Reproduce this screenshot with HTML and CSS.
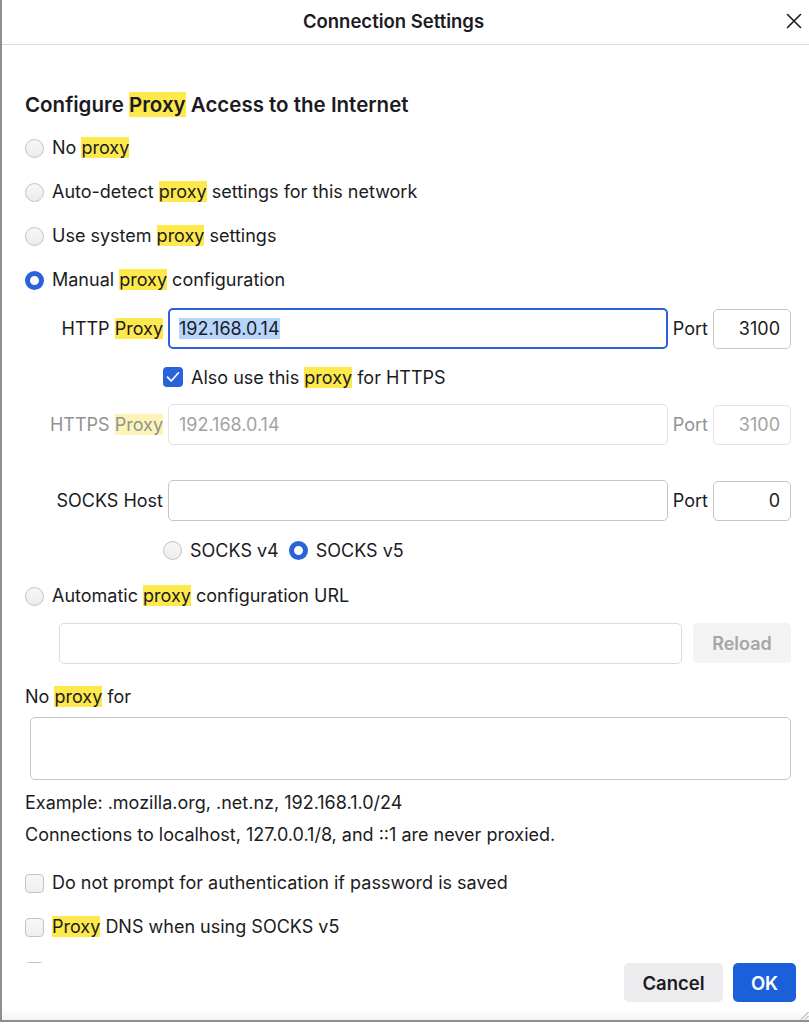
FILE: index.html
```html
<!DOCTYPE html>
<html lang="en">
<head>
<meta charset="utf-8">
<title>Connection Settings</title>
<link rel="stylesheet" href="styles.css">
</head>
<body>
<div class="window">
  <header class="titlebar">
    <h1 class="title">Connection Settings</h1>
    <button class="close" aria-label="Close">
      <svg width="16" height="16" viewBox="0 0 16 16"><path d="M1.5 1.5 L14.5 14.5 M14.5 1.5 L1.5 14.5" stroke="#1c1b22" stroke-width="1.6" fill="none" stroke-linecap="round"/></svg>
    </button>
  </header>

  <main class="content">
    <h2 class="heading">Configure <mark>Proxy</mark> Access to the Internet</h2>

    <label class="opt first"><span class="radio"></span><span>No <mark>proxy</mark></span></label>
    <label class="opt"><span class="radio"></span><span>Auto-detect <mark>proxy</mark> settings for this network</span></label>
    <label class="opt"><span class="radio"></span><span>Use system <mark>proxy</mark> settings</span></label>
    <label class="opt"><span class="radio on"></span><span>Manual <mark>proxy</mark> configuration</span></label>

    <div class="prow http">
      <span class="plabel">HTTP <mark>Proxy</mark></span>
      <div class="field focus"><span class="sel">192.168.0.14</span></div>
      <span class="port">Port</span>
      <div class="field num">3100</div>
    </div>

    <div class="prow check-row">
      <label class="chk-line"><span class="check on"><svg width="14" height="12" viewBox="0 0 14 12"><path d="M1.5 6.2 L5.2 10 L12.5 1.8" stroke="#fff" stroke-width="1.7" fill="none" stroke-linecap="round" stroke-linejoin="round"/></svg></span><span>Also use this <mark>proxy</mark> for HTTPS</span></label>
    </div>

    <div class="prow https disabled">
      <span class="plabel">HTTPS <mark>Proxy</mark></span>
      <div class="field">192.168.0.14</div>
      <span class="port">Port</span>
      <div class="field num">3100</div>
    </div>

    <div class="prow socks">
      <span class="plabel">SOCKS Host</span>
      <div class="field"></div>
      <span class="port">Port</span>
      <div class="field num">0</div>
    </div>

    <div class="prow socks-ver">
      <div class="ver-line">
        <label class="mini"><span class="radio"></span><span>SOCKS v4</span></label>
        <label class="mini"><span class="radio on"></span><span>SOCKS v5</span></label>
      </div>
    </div>

    <label class="opt auto"><span class="radio"></span><span>Automatic <mark>proxy</mark> configuration URL</span></label>

    <div class="url-row">
      <div class="field url"></div>
      <button class="reload">Reload</button>
    </div>

    <p class="noproxy">No <mark>proxy</mark> for</p>
    <div class="textarea"></div>
    <p class="hint example">Example: .mozilla.org, .net.nz, 192.168.1.0/24</p>
    <p class="hint">Connections to localhost, 127.0.0.1/8, and ::1 are never proxied.</p>

    <label class="opt chk first-chk"><span class="check"></span><span>Do not prompt for authentication if password is saved</span></label>
    <label class="opt chk"><span class="check"></span><span><mark>Proxy</mark> DNS when using SOCKS v5</span></label>
    <div class="opt chk"><span class="check"></span></div>
  </main>

  <footer class="buttons">
    <button class="btn cancel">Cancel</button>
    <button class="btn ok">OK</button>
    <svg class="grip" width="9" height="9" viewBox="0 0 9 9"><path d="M8.5 1 L1 8.5 M8.5 5 L5 8.5" stroke="#9a9a9a" stroke-width="1" fill="none"/></svg>
  </footer>
</div>
</body>
</html>
```

FILE: styles.css
```css
* { box-sizing: border-box; }

html, body {
  margin: 0;
  padding: 0;
  background: #ffffff;
}

body {
  font-family: "Inter", "Liberation Sans", sans-serif;
  font-size: 18px;
  color: #1c1b22;
  width: 809px;
}

mark {
  background: #fde94b;
  color: inherit;
}

.window {
  position: relative;
  height: 1022px;
  border-left: 2px solid #8e8e8e;
  border-bottom: 2px solid #8e8e8e;
  display: flex;
  flex-direction: column;
  overflow: hidden;
}

.titlebar {
  height: 45px;
  flex: 0 0 45px;
  border-bottom: 1px solid #dadada;
  display: flex;
  align-items: center;
  justify-content: center;
  padding-right: 24px;
  position: relative;
}

.title {
  margin: 0;
  font-size: 18.5px;
  font-weight: 600;
  line-height: 24px;
  margin-top: -3px;
}

.close {
  position: absolute;
  right: 6px;
  top: 12px;
  width: 18px;
  height: 18px;
  padding: 0;
  border: 0;
  background: transparent;
  display: flex;
  align-items: center;
  justify-content: center;
}

.content {
  flex: 0 0 918px;
  height: 918px;
  overflow: hidden;
  padding: 0 18px 0 23px;
}

.heading {
  margin: 47px 0 0;
  font-size: 20.5px;
  font-weight: 600;
  line-height: 26px;
}

.opt {
  display: flex;
  align-items: center;
  height: 24px;
  line-height: 24px;
  margin-top: 20px;
  gap: 8px;
}
.opt.first { margin-top: 18px; }

.radio {
  flex: 0 0 19px;
  width: 19px;
  height: 19px;
  border-radius: 50%;
  border: 1px solid #c2c2c4;
  background: linear-gradient(#f7f7f7, #ececec);
  display: inline-block;
}
.radio.on {
  border: 5.5px solid #2a63d9;
  background: #ffffff;
}

.check {
  flex: 0 0 19px;
  width: 19px;
  height: 19px;
  border-radius: 4px;
  border: 1px solid #c4c4c6;
  background: linear-gradient(#f7f7f7, #efefef);
  display: inline-flex;
  align-items: center;
  justify-content: center;
}
.check.on {
  width: 20px;
  height: 20px;
  flex-basis: 20px;
  border: 0;
  background: #2a63d9;
}

.prow {
  display: grid;
  grid-template-columns: 138px 1fr auto 78px;
  column-gap: 5px;
  align-items: center;
}
.prow.http { margin-top: 16px; }
.prow.check-row { margin-top: 18px; height: 20px; }
.prow.https { margin-top: 17px; }
.prow.socks { margin-top: 35px; }
.prow.socks-ver { margin-top: 17px; height: 24px; }

.plabel {
  text-align: right;
  white-space: nowrap;
}

.port { white-space: nowrap; }

.field {
  height: 41px;
  border: 1px solid #c6c6c8;
  border-radius: 5px;
  background: #fff;
  padding: 0 10px;
  display: flex;
  align-items: center;
  white-space: nowrap;
}
.field.focus {
  border: 2px solid #2a63d9;
  padding-left: 9px;
}
.field.num {
  justify-content: flex-end;
  height: 40px;
}
.sel { background: #b6d5fd; }

.disabled { color: #929292; }
.disabled mark { background: #fcf4b6; }
.disabled .field { border-color: #e3e3e3; color: #a3a3a3; }

.check-row .chk-line,
.socks-ver .ver-line {
  grid-column: 2 / 5;
  margin-left: -5px;
  display: flex;
  align-items: center;
  gap: 8px;
}
.chk-line { height: 20px; }

.ver-line { gap: 0; }
.mini {
  display: flex;
  align-items: center;
  gap: 8px;
}
.ver-line .mini:first-child { margin-right: 2px; }

.opt.auto { margin-top: 22px; }

.url-row {
  display: flex;
  margin-top: 15px;
  margin-left: 34px;
  gap: 11px;
  height: 41px;
}
.field.url { flex: 1 1 auto; border-color: #dcdcdc; }

.reload {
  flex: 0 0 98px;
  height: 40px;
  border: 0;
  border-radius: 5px;
  background: #f3f3f4;
  color: #a6a6a6;
  font-family: inherit;
  font-size: 18px;
  font-weight: 600;
}

.noproxy {
  margin: 21px 0 0;
  line-height: 24px;
}

.textarea {
  margin: 8px 0 0 5px;
  height: 63px;
  border: 1px solid #c6c6c8;
  border-radius: 5px;
}

.hint {
  margin: 8px 0 0;
  line-height: 24px;
}
.hint.example { margin-top: 11px; }

.opt.chk { margin-top: 20px; }
.opt.chk.first-chk { margin-top: 24px; }

.buttons {
  flex: 1 1 auto;
  display: flex;
  justify-content: flex-end;
  align-items: flex-start;
  gap: 10px;
  padding-right: 13px;
  position: relative;
  background: linear-gradient(#ffffff 80%, #f4f4f4);
}

.btn {
  height: 39px;
  border: 0;
  border-radius: 5px;
  font-family: inherit;
  font-size: 18.5px;
  font-weight: 600;
  padding: 0;
}
.cancel {
  width: 99px;
  background: #ececee;
  color: #1c1b22;
}
.ok {
  width: 63px;
  background: #1c5fdb;
  color: #ffffff;
}

.grip {
  position: absolute;
  right: 0;
  bottom: 0;
}
```
